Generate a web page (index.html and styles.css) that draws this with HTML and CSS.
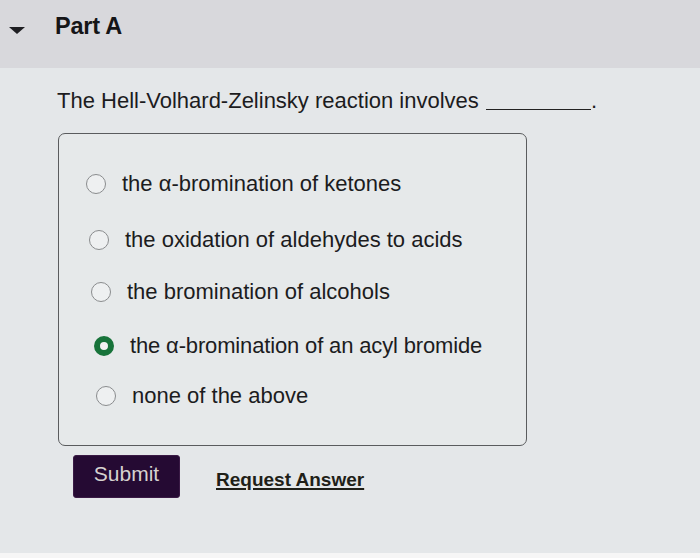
FILE: index.html
```html
<!DOCTYPE html>
<html>
<head>
<meta charset="utf-8">
<link rel="stylesheet" href="styles.css">
</head>
<body>
<div class="page">
  <header class="part-header">
    <span class="caret"></span>
    <h2 class="part-title">Part A</h2>
  </header>
  <main class="content">
    <p class="question">The Hell-Volhard-Zelinsky reaction involves <span class="blank"></span>.</p>
    <div class="choices">
      <label class="choice c1"><span class="radio"></span><span class="label">the α-bromination of ketones</span></label>
      <label class="choice c2"><span class="radio"></span><span class="label">the oxidation of aldehydes to acids</span></label>
      <label class="choice c3"><span class="radio"></span><span class="label">the bromination of alcohols</span></label>
      <label class="choice c4"><span class="radio checked"></span><span class="label">the α-bromination of an acyl bromide</span></label>
      <label class="choice c5"><span class="radio"></span><span class="label">none of the above</span></label>
    </div>
    <div class="actions">
      <button class="submit">Submit</button>
      <a class="request">Request Answer</a>
    </div>
  </main>
</div>
</body>
</html>
```

FILE: styles.css
```css
html, body {
  margin: 0;
  padding: 0;
}
body {
  width: 700px;
  height: 558px;
  overflow: hidden;
  background: #e2e4e6;
  font-family: "Liberation Sans", Arial, sans-serif;
  color: #1c1c1e;
}
.page {
  display: flex;
  flex-direction: column;
  height: 553px;
  border-bottom: 5px solid #f6f6f6;
}
.part-header {
  height: 68px;
  background: #d8d8dc;
  display: flex;
  align-items: flex-start;
  padding-top: 13px;
  box-sizing: border-box;
}
.caret {
  width: 0;
  height: 0;
  border-left: 8px solid transparent;
  border-right: 8px solid transparent;
  border-top: 7px solid #1e1e22;
  margin: 14px 0 0 9px;
}
.part-title {
  margin: 0 0 0 30px;
  font-size: 23.5px;
  font-weight: bold;
  letter-spacing: -0.2px;
  color: #151517;
}
.content {
  flex: 1;
  background: #e4e7e9;
  padding: 20px 0 0 57px;
}
.question {
  margin: 0;
  font-size: 22px;
  line-height: 26px;
}
.blank {
  display: inline-block;
  width: 105px;
  border-bottom: 1.5px solid #222;
  margin-left: 1px;
  vertical-align: -2px;
}
.choices {
  margin: 19px 0 0 1px;
  width: 469px;
  height: 313px;
  box-sizing: border-box;
  border: 1.5px solid #5a5c5e;
  border-radius: 7px;
  background: #e6e9ea;
  padding: 37px 0 0 27px;
  display: flex;
  flex-direction: column;
  gap: 28px;
}
.choice {
  display: flex;
  align-items: center;
  gap: 16px;
  font-size: 22px;
  height: 26px;
}
.c2 { padding-left: 3px; margin-top: 2px; }
.c3 { padding-left: 5px; margin-top: -2px; }
.c4 { padding-left: 8px; margin-top: 0; }
.c4 .label { letter-spacing: -0.15px; }
.c5 { padding-left: 10px; margin-top: -4px; }
.radio {
  width: 20px;
  height: 20px;
  border: 1.5px solid #8a8c8e;
  border-radius: 50%;
  background: #eef0f1;
  box-sizing: border-box;
  flex: none;
}
.radio.checked {
  border: 6px solid #17733a;
  background: #f2f2f2;
}
.actions {
  display: flex;
  align-items: center;
  gap: 36px;
  margin: 9px 0 0 16px;
}
.submit {
  width: 107px;
  height: 43px;
  background: #250a33;
  color: #d6d2d0;
  border: 1px solid #3a1a45;
  border-radius: 3px;
  font-family: "Liberation Sans", Arial, sans-serif;
  font-size: 21px;
  padding: 0 0 6px 0;
}
.request {
  font-size: 19px;
  font-weight: bold;
  color: #1f1f18;
  text-decoration: underline;
  text-decoration-thickness: 2px;
  text-underline-offset: 2px;
  margin-top: 6px;
}
```
